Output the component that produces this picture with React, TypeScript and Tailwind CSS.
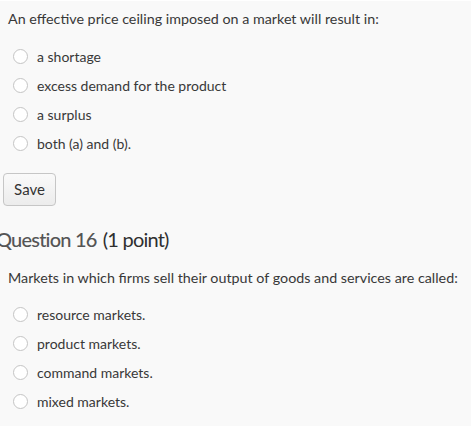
import React from 'react';

type Question = {
  prompt: string;
  options: string[];
};

const firstQuestion: Question = {
  prompt: 'An effective price ceiling imposed on a market will result in:',
  options: ['a shortage', 'excess demand for the product', 'a surplus', 'both (a) and (b).'],
};

const secondQuestion: Question = {
  prompt: 'Markets in which firms sell their output of goods and services are called:',
  options: ['resource markets.', 'product markets.', 'command markets.', 'mixed markets.'],
};

function OptionList({ options }: { options: string[] }) {
  return (
    <ul className="flex flex-col">
      {options.map((option) => (
        <li key={option} className="flex h-[29px] items-center">
          <span className="ml-[13px] h-[15px] w-[15px] shrink-0 rounded-full border border-[#c4c4c4] bg-white" />
          <span className="ml-[9px] text-[14px] leading-5 text-[#383838]">{option}</span>
        </li>
      ))}
    </ul>
  );
}

export default function App() {
  return (
    <div className="min-h-[426px] w-full bg-white" style={{ fontFamily: 'Lato, "Open Sans", sans-serif' }}>
      <div className="mt-px min-h-[425px] w-[471px] overflow-hidden bg-[#f9f9f9] pb-4">
        {/* Question 15 */}
        <p className="ml-2 pt-[8px] text-[14.3px] leading-5 text-[#383838]">{firstQuestion.prompt}</p>
        <div className="mt-[13px]">
          <OptionList options={firstQuestion.options} />
        </div>

        <button
          type="button"
          className="ml-[3px] mt-[15px] h-[33px] w-[53px] rounded-[4px] border border-[#c6c6c6] bg-gradient-to-b from-[#fafafa] to-[#ececec] text-[15px] text-[#333]"
        >
          Save
        </button>

        {/* Question 16 */}
        <h2 className="-ml-[4px] mt-[19px] text-[20px] leading-7 tracking-[-0.8px] text-[#2f2f2f]">
          <span className="font-medium text-[#555]">Question 16</span>{' '}
          <span className="ml-[2px]">(1 point)</span>
        </h2>

        <p className="ml-2 mt-[15px] text-[14.3px] leading-5 text-[#383838]">{secondQuestion.prompt}</p>
        <div className="mt-[12px]">
          <OptionList options={secondQuestion.options} />
        </div>
      </div>
    </div>
  );
}
